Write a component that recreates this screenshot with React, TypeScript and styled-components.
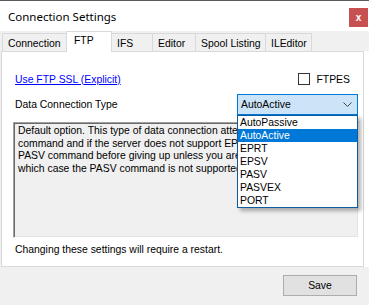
import React from "react";
import styled, { createGlobalStyle } from "styled-components";

const GlobalStyle = createGlobalStyle`
  html, body { margin: 0; padding: 0; background: #f0f0f0; }
  body {
    font-family: "Liberation Sans", Arial, sans-serif;
    font-size: 10.4px;
    color: #000;
  }
  * { box-sizing: border-box; }
`;

const Window = styled.div`
  width: 369px;
  height: 305px;
  border-top: 1px solid #5b5b5b;
  background: #f0f0f0;
  display: flex;
  flex-direction: column;
  overflow: hidden;
`;

const TitleBar = styled.div`
  height: 30px;
  background: #fff;
  display: flex;
  align-items: flex-start;
  justify-content: space-between;
  padding: 7px 1px 0 8px;
`;

const TitleText = styled.span`
  font-family: "Noto Sans", "Open Sans", sans-serif;
  font-size: 11.5px;
  line-height: 17px;
  color: #000;
`;

const CloseButton = styled.div`
  width: 19px;
  height: 19px;
  background: #c75050;
  color: #fff;
  font-weight: bold;
  font-size: 10px;
  display: flex;
  align-items: center;
  justify-content: center;
  line-height: 1;
`;

const TabControl = styled.div`
  margin-left: 1px;
  display: flex;
  flex-direction: column;
`;

const TabStrip = styled.div`
  height: 21px;
  display: flex;
  align-items: flex-end;
  padding-left: 1px;
  position: relative;
  z-index: 2;
  margin-bottom: -1px;
`;

const Tab = styled.div<{ $w: number; $active?: boolean }>`
  width: ${(p) => p.$w}px;
  height: ${(p) => (p.$active ? 21 : 19)}px;
  margin-left: -1px;
  &:first-child { margin-left: 0; }
  border: 1px solid #d9d9d9;
  border-bottom: ${(p) => (p.$active ? "none" : "1px solid #d9d9d9")};
  background: ${(p) => (p.$active ? "#fff" : "#f0f0f0")};
  position: relative;
  z-index: ${(p) => (p.$active ? 2 : 1)};
  padding: ${(p) => (p.$active ? "2px 0 0 7px" : "3px 0 0 5px")};
  line-height: 13px;
  white-space: nowrap;
`;

const PageRow = styled.div`
  display: flex;
  background: #fff;
`;

const Panel = styled.div`
  width: 363px;
  height: 216px;
  background: #fff;
  border: 1px solid #d9d9d9;
  padding: 20px 5px 0 10px;
  display: flex;
  flex-direction: column;
`;

const TopRow = styled.div`
  display: flex;
  align-items: center;
  justify-content: space-between;
  height: 14px;
  padding-left: 3px;
  padding-right: 8px;
`;

const Link = styled.a`
  color: #0000ff;
  text-decoration: underline;
  line-height: 13px;
  cursor: pointer;
`;

const CheckLabel = styled.label`
  display: flex;
  align-items: center;
  gap: 7px;
  line-height: 13px;
`;

const CheckBox = styled.span`
  width: 12px;
  height: 12px;
  border: 1px solid #333;
  background: #fff;
  display: inline-block;
`;

const SelectRow = styled.div`
  margin-top: 8px;
  display: flex;
  align-items: center;
  justify-content: space-between;
  padding-left: 3px;
`;

const FieldLabel = styled.span`
  line-height: 13px;
`;

const SelectWrap = styled.div`
  position: relative;
  width: 121px;
`;

const SelectBox = styled.div`
  height: 21px;
  border: 1px solid #0078d7;
  background: #cce4f7;
  display: flex;
  align-items: center;
  justify-content: space-between;
  padding: 0 5px 0 3px;
  line-height: 13px;
`;

const DropList = styled.div`
  position: absolute;
  top: 100%;
  left: 0;
  width: 121px;
  background: #fff;
  border: 1px solid #0f5aa0;
  box-shadow: 3px 3px 4px rgba(0, 0, 0, 0.3);
  z-index: 10;
`;

const DropItem = styled.div<{ $active?: boolean }>`
  height: 13px;
  line-height: 13px;
  padding-left: 2px;
  background: ${(p) => (p.$active ? "#0078d7" : "transparent")};
  color: ${(p) => (p.$active ? "#fff" : "#000")};
  white-space: nowrap;
`;

const Description = styled.div`
  margin-top: 7px;
  width: 346px;
  height: 116px;
  margin-left: 1px;
  background: #f0f0f0;
  border-top: 1px solid #a0a0a0;
  border-left: 1px solid #a0a0a0;
  border-right: 1px solid #fff;
  border-bottom: 1px solid #fff;
  box-shadow: inset 1px 1px 0 #696969, inset -1px -1px 0 #e3e3e3;
  padding: 2px 0 0 4px;
  line-height: 12.5px;
  white-space: pre;
  overflow: hidden;
`;

const Note = styled.div`
  margin-top: 5px;
  padding-left: 3px;
  line-height: 13px;
`;

const Footer = styled.div`
  display: flex;
  justify-content: flex-end;
  padding: 8px 12px 0 0;
`;

const Button = styled.button`
  width: 74px;
  height: 21px;
  background: #e1e1e1;
  border: 1px solid #adadad;
  font-family: "Liberation Sans", Arial, sans-serif;
  font-size: 10.4px;
  color: #000;
  padding: 0;
`;

const tabs = [
  { label: "Connection", w: 65 },
  { label: "FTP", w: 46, active: true },
  { label: "IFS", w: 42 },
  { label: "Editor", w: 44 },
  { label: "Spool Listing", w: 71 },
  { label: "ILEditor", w: 47 },
];

const options = ["AutoPassive", "AutoActive", "EPRT", "EPSV", "PASV", "PASVEX", "PORT"];

const descriptionLines = [
  "Default option. This type of data connection attempts to use the EPSV",
  "command and if the server does not support EPSV it falls back to the",
  "PASV command before giving up unless you are connected via IPv6 in",
  "which case the PASV command is not supported.",
];

export default function App() {
  return (
    <>
      <GlobalStyle />
      <Window>
        <TitleBar>
          <TitleText>Connection Settings</TitleText>
          <CloseButton>x</CloseButton>
        </TitleBar>
        <TabControl>
          <TabStrip>
            {tabs.map((t) => (
              <Tab key={t.label} $w={t.w} $active={t.active}>
                {t.label}
              </Tab>
            ))}
          </TabStrip>
          <PageRow>
            <Panel>
              <TopRow>
                <Link>Use FTP SSL (Explicit)</Link>
                <CheckLabel>
                  <CheckBox />
                  FTPES
                </CheckLabel>
              </TopRow>
              <SelectRow>
                <FieldLabel>Data Connection Type</FieldLabel>
                <SelectWrap>
                  <SelectBox>
                    <span>AutoActive</span>
                    <svg width="9" height="5" viewBox="0 0 9 5">
                      <polyline points="0.5,0.5 4.5,4.5 8.5,0.5" fill="none" stroke="#444" strokeWidth="1" />
                    </svg>
                  </SelectBox>
                  <DropList>
                    {options.map((o) => (
                      <DropItem key={o} $active={o === "AutoActive"}>
                        {o}
                      </DropItem>
                    ))}
                  </DropList>
                </SelectWrap>
              </SelectRow>
              <Description>{descriptionLines.join("\n")}</Description>
              <Note>Changing these settings will require a restart.</Note>
            </Panel>
          </PageRow>
        </TabControl>
        <Footer>
          <Button>Save</Button>
        </Footer>
      </Window>
    </>
  );
}
